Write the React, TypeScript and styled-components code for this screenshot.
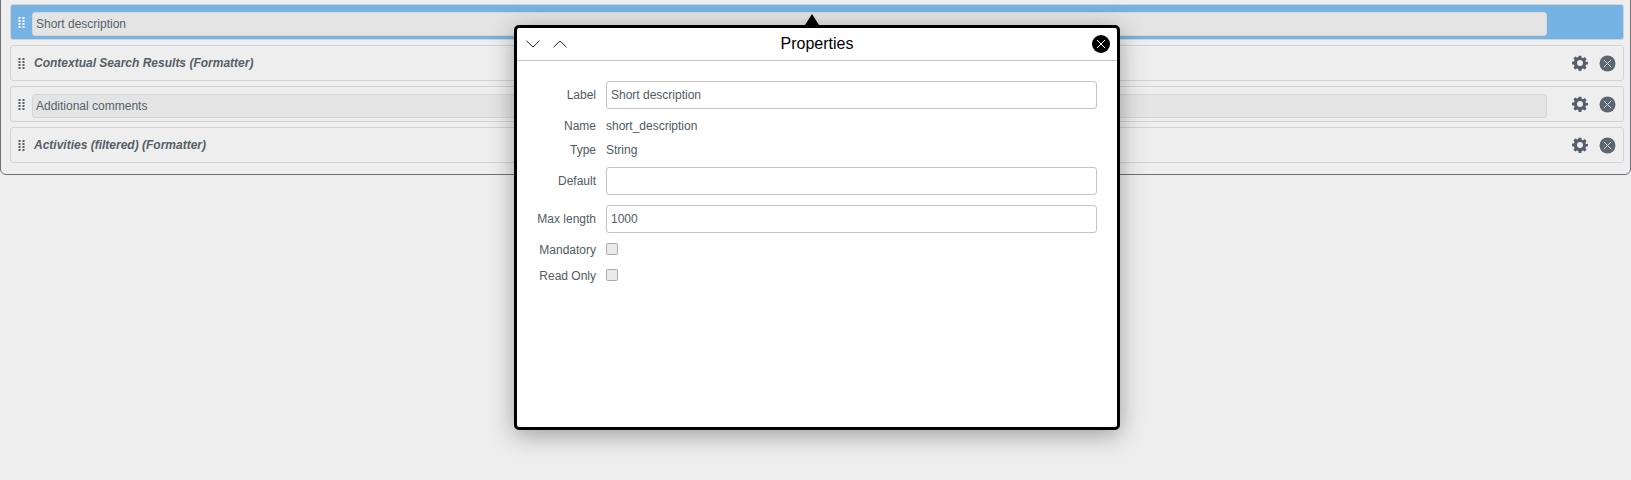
import styled, { createGlobalStyle } from 'styled-components'

const GlobalStyle = createGlobalStyle`
  html, body {
    margin: 0;
    height: 100%;
    background: #eeeeee;
    overflow: hidden;
  }
  body {
    font-family: "Liberation Sans", Arial, sans-serif;
    font-size: 12px;
    color: #4f5a63;
  }
`

const Page = styled.div`
  position: relative;
  display: flow-root;
  height: 480px;
`

const Panel = styled.div`
  margin-top: -10px;
  padding: 13px 6px 11px 9px;
  border: 1px solid #6f6f78;
  border-radius: 0 0 6px 6px;
  display: flex;
  flex-direction: column;
  gap: 5px;
`

const Row = styled.div<{ $active?: boolean }>`
  height: 36px;
  box-sizing: border-box;
  display: flex;
  align-items: center;
  padding: 0 0 0 7px;
  border: 1px solid #d3d3d3;
  border-radius: 3px;
  background: ${p => (p.$active ? '#74b3e3' : '#eeeeee')};
  color: ${p => (p.$active ? '#ffffff' : '#555f68')};
`

const GripBox = styled.svg`
  width: 7px;
  height: 12px;
  flex: none;
  margin: 1px 7px 0 0;
`

const FieldBar = styled.div`
  flex: 1;
  height: 24px;
  margin-top: 4px;
  box-sizing: border-box;
  padding: 0 3px;
  display: flex;
  align-items: center;
  background: #e4e4e4;
  border: 1px solid #d6d6d6;
  border-radius: 3px;
  color: #555f68;
`

const FormatterName = styled.div`
  flex: 1;
  padding-left: 2px;
  font-weight: bold;
  font-style: italic;
  color: #555f68;
`

const Actions = styled.div`
  width: 76px;
  height: 17px;
  flex: none;
  display: flex;
  align-items: center;
  justify-content: flex-end;
  gap: 11px;
  padding-right: 7px;
  box-sizing: border-box;
`

const GearIcon = styled.svg`
  width: 16px;
  height: 16px;
`

const RemoveIcon = styled.svg`
  width: 17px;
  height: 17px;
`

const Modal = styled.section`
  position: absolute;
  left: 514px;
  top: 25px;
  width: 606px;
  height: 405px;
  box-sizing: border-box;
  background: #ffffff;
  border: 3px solid #000000;
  border-radius: 5px;
  box-shadow: 0 5px 25px rgba(0, 0, 0, 0.34);
`

const Pointer = styled.div`
  position: absolute;
  left: 288px;
  top: -14px;
  width: 0;
  height: 0;
  border-left: 7px solid transparent;
  border-right: 7px solid transparent;
  border-bottom: 11px solid #000000;
`

const ModalHeader = styled.header`
  height: 31px;
  display: flex;
  align-items: center;
  justify-content: space-between;
  padding: 0 7px 1px 9px;
  border-bottom: 1px solid #c4c4c4;
`

const NavButtons = styled.div<{ $end?: boolean }>`
  display: flex;
  gap: 13px;
  width: 60px;
  justify-content: ${p => (p.$end ? 'flex-end' : 'flex-start')};
`

const Chevron = styled.svg`
  width: 14px;
  height: 8px;
`

const ModalTitle = styled.h2`
  margin: 0 2px 0 0;
  font-size: 16px;
  font-weight: normal;
  color: #000000;
`

const CloseButton = styled.svg`
  width: 18px;
  height: 18px;
`

const FormGrid = styled.div`
  display: grid;
  grid-template-columns: 76px 491px;
  column-gap: 10px;
  padding: 20px 0 0 3px;
  align-items: center;
`

const FieldLabel = styled.div`
  text-align: right;
  color: #4f5a63;
`

const TextField = styled.input`
  width: 100%;
  height: 28px;
  box-sizing: border-box;
  padding: 0 4px;
  margin: 0;
  font: inherit;
  color: #4f5a63;
  background: #ffffff;
  border: 1px solid #c4c4c4;
  border-radius: 3px;
  outline: none;
`

const ReadValue = styled.div<{ $height: number }>`
  height: ${p => p.$height}px;
  display: flex;
  align-items: center;
  color: #4f5a63;
`

const CheckCell = styled.div`
  height: 26px;
  display: flex;
  align-items: center;
`

const CheckBox = styled.span`
  display: block;
  width: 12px;
  height: 12px;
  box-sizing: border-box;
  margin-top: -2px;
  background: #eaeaea;
  border: 1px solid #a9a9a9;
  border-radius: 2px;
`

const Gap = styled.div<{ $height: number }>`
  grid-column: 1 / -1;
  height: ${p => p.$height}px;
`

function Grip() {
  const dots = []
  for (let y = 0; y < 4; y++) {
    for (let x = 0; x < 2; x++) {
      dots.push(<rect key={`${x}-${y}`} x={x * 4} y={y * 3} width={2} height={2} />)
    }
  }
  return (
    <GripBox viewBox="0 0 6 12" fill="currentColor">
      {dots}
    </GripBox>
  )
}

function Gear() {
  return (
    <GearIcon viewBox="0 0 24 24" fill="#555f6b">
      <path
        fillRule="evenodd"
        d="M10 1h4l.6 3.1 1.9.8L19.1 3.1l2.8 2.8-1.8 2.6.8 1.9L24 10v4l-3.1.6-.8 1.9 1.8 2.6-2.8 2.8-2.6-1.8-1.9.8L14 24h-4l-.6-3.1-1.9-.8-2.6 1.8-2.8-2.8 1.8-2.6-.8-1.9L0 14v-4l3.1-.6.8-1.9-1.8-2.6 2.8-2.8 2.6 1.8 1.9-.8zM12 7.5a4.5 4.5 0 1 0 0 9 4.5 4.5 0 0 0 0-9z"
      />
    </GearIcon>
  )
}

function Remove() {
  return (
    <RemoveIcon viewBox="0 0 17 17">
      <circle cx="8.5" cy="8.5" r="8" fill="#5b6672" />
      <path d="M4.8 4.8l7.4 7.4M12.2 4.8l-7.4 7.4" stroke="#d5d9dc" strokeWidth="1" />
    </RemoveIcon>
  )
}

export default function App() {
  return (
    <Page>
      <GlobalStyle />
      <Panel>
        <Row $active>
          <Grip />
          <FieldBar>Short description</FieldBar>
          <Actions />
        </Row>
        <Row>
          <Grip />
          <FormatterName>Contextual Search Results (Formatter)</FormatterName>
          <Actions>
            <Gear />
            <Remove />
          </Actions>
        </Row>
        <Row>
          <Grip />
          <FieldBar>Additional comments</FieldBar>
          <Actions>
            <Gear />
            <Remove />
          </Actions>
        </Row>
        <Row>
          <Grip />
          <FormatterName>Activities (filtered) (Formatter)</FormatterName>
          <Actions>
            <Gear />
            <Remove />
          </Actions>
        </Row>
      </Panel>

      <Modal>
        <Pointer />
        <ModalHeader>
          <NavButtons>
            <Chevron viewBox="0 0 14 8" fill="none" stroke="#222" strokeWidth="1">
              <path d="M0.5 0.8L7 7l6.5-6.2" />
            </Chevron>
            <Chevron viewBox="0 0 14 8" fill="none" stroke="#222" strokeWidth="1">
              <path d="M0.5 7.2L7 1l6.5 6.2" />
            </Chevron>
          </NavButtons>
          <ModalTitle>Properties</ModalTitle>
          <NavButtons $end>
            <CloseButton viewBox="0 0 18 18">
              <circle cx="9" cy="9" r="9" fill="#000" />
              <path d="M5 5l8 8M13 5l-8 8" stroke="#fff" strokeWidth="1" />
            </CloseButton>
          </NavButtons>
        </ModalHeader>
        <FormGrid>
          <FieldLabel>Label</FieldLabel>
          <TextField defaultValue="Short description" />
          <Gap $height={5} />
          <FieldLabel>Name</FieldLabel>
          <ReadValue $height={24}>short_description</ReadValue>
          <FieldLabel>Type</FieldLabel>
          <ReadValue $height={24}>String</ReadValue>
          <Gap $height={5} />
          <FieldLabel>Default</FieldLabel>
          <TextField />
          <Gap $height={10} />
          <FieldLabel>Max length</FieldLabel>
          <TextField defaultValue="1000" />
          <Gap $height={4} />
          <FieldLabel>Mandatory</FieldLabel>
          <CheckCell>
            <CheckBox />
          </CheckCell>
          <FieldLabel>Read Only</FieldLabel>
          <CheckCell>
            <CheckBox />
          </CheckCell>
        </FormGrid>
      </Modal>
    </Page>
  )
}
